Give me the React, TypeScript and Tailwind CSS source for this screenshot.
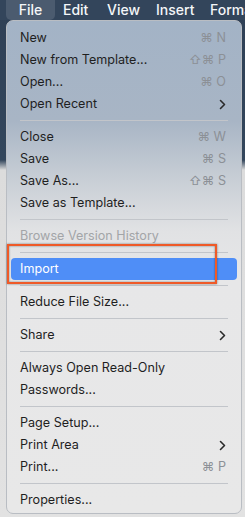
type Row =
  | { kind: "item"; label: string; shortcut?: string; submenu?: boolean; disabled?: boolean; active?: boolean }
  | { kind: "sep" };

const rows: Row[] = [
  { kind: "item", label: "New", shortcut: "⌘ N" },
  { kind: "item", label: "New from Template...", shortcut: "⇧⌘ P" },
  { kind: "item", label: "Open...", shortcut: "⌘ O" },
  { kind: "item", label: "Open Recent", submenu: true },
  { kind: "sep" },
  { kind: "item", label: "Close", shortcut: "⌘ W" },
  { kind: "item", label: "Save", shortcut: "⌘ S" },
  { kind: "item", label: "Save As...", shortcut: "⇧⌘ S" },
  { kind: "item", label: "Save as Template..." },
  { kind: "sep" },
  { kind: "item", label: "Browse Version History", disabled: true },
  { kind: "sep" },
  { kind: "item", label: "Import", active: true },
  { kind: "sep" },
  { kind: "item", label: "Reduce File Size..." },
  { kind: "sep" },
  { kind: "item", label: "Share", submenu: true },
  { kind: "sep" },
  { kind: "item", label: "Always Open Read-Only" },
  { kind: "item", label: "Passwords..." },
  { kind: "sep" },
  { kind: "item", label: "Page Setup..." },
  { kind: "item", label: "Print Area", submenu: true },
  { kind: "item", label: "Print...", shortcut: "⌘ P" },
  { kind: "sep" },
  { kind: "item", label: "Properties..." },
];

const Chevron = () => (
  <svg width="7" height="11" viewBox="0 0 7 11" fill="none">
    <path d="M1.5 1.5 L5.5 5.5 L1.5 9.5" stroke="#2a2a2a" strokeWidth="1.6" strokeLinecap="round" strokeLinejoin="round" />
  </svg>
);

const App = () => {
  return (
    <div
      className="relative w-[245px] h-[517px] overflow-hidden bg-[linear-gradient(to_bottom,#2f4055_0px,#33465c_160px,#dcdcdc_170px,#e2e2e2_100%)]"
      style={{ fontFamily: "Inter, 'Noto Sans', 'DejaVu Sans', sans-serif" }}
    >
      {/* menu bar */}
      <div className="h-[20px] bg-[#33455b] flex items-center text-[#f4f6f8] text-[14px] font-medium whitespace-nowrap">
        <div className="shrink-0 ml-[6px] w-[49px] h-[20px] rounded-b-[5px] bg-[#4b5b6f] flex items-center justify-center pb-[2px]">File</div>
        <div className="shrink-0 ml-[8px] w-[44px] pb-[2px]">Edit</div>
        <div className="shrink-0 w-[49px] pb-[2px]">View</div>
        <div className="shrink-0 w-[54px] pb-[2px]">Insert</div>
        <div className="shrink-0 pb-[2px]">Format</div>
      </div>

      {/* dropdown */}
      <div className="ml-[6px] w-[236px] rounded-[7px] border border-[#b9bdc3] pt-[6px] pb-[2px] bg-[linear-gradient(to_bottom,#a3b3c6_0px,#a8b5c5_100px,#c9cfd6_160px,#e1e2e4_210px,#e7e7e8_260px,#e8e8e8_100%)] text-[12.6px] text-[#1f1f1f]">
        {rows.map((r, i) =>
          r.kind === "sep" ? (
            <div key={i} className="h-[11px] flex items-center px-[13px]">
              <div className="h-px w-full bg-[#c2c5ca]" />
            </div>
          ) : (
            <div
              key={i}
              className={
                r.active
                  ? "h-[22px] mx-[4px] px-[9px] rounded-[4px] bg-[#4f8ef7] text-white flex items-center justify-between"
                  : "h-[22px] px-[13px] flex items-center justify-between"
              }
            >
              <span className={r.disabled ? "text-[#a3a5a8]" : ""}>{r.label}</span>
              {r.shortcut && <span className="text-[#8c9096] mr-[2px]">{r.shortcut}</span>}
              {r.submenu && (
                <span className="mr-[2px] flex items-center">
                  <Chevron />
                </span>
              )}
            </div>
          )
        )}
      </div>

      {/* annotation box */}
      <div className="absolute left-[7px] top-[244px] w-[210px] h-[40px] border-2 border-[#ef5a28] shadow-[0_0_2px_rgba(0,0,0,0.45),inset_0_0_2px_rgba(0,0,0,0.5)]" />
    </div>
  );
};

export default App;
